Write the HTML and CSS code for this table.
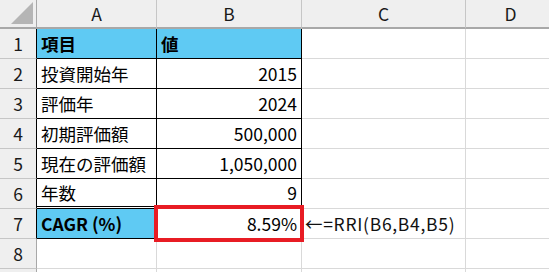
FILE: index.html
```html
<!DOCTYPE html>
<html lang="ja">
<head>
<meta charset="utf-8">
<title>CAGR</title>
<link rel="stylesheet" href="styles.css">
</head>
<body>
<div class="sheet">
  <div class="grid">
    <div class="ch corner"><svg class="tri" width="22" height="22" viewBox="0 0 22 22"><polygon points="22,0 22,22 0,22" fill="#b5b5b5"/></svg></div>
    <div class="ch">A</div>
    <div class="ch">B</div>
    <div class="ch">C</div>
    <div class="ch">D</div>

    <div class="rh edge">1</div>
    <div class="c a fill bold">項目</div>
    <div class="c b fill bold left">値</div>
    <div class="c"></div>
    <div class="c"></div>

    <div class="rh edge">2</div>
    <div class="c a">投資開始年</div>
    <div class="c b num">2015</div>
    <div class="c"></div>
    <div class="c"></div>

    <div class="rh edge">3</div>
    <div class="c a">評価年</div>
    <div class="c b num">2024</div>
    <div class="c"></div>
    <div class="c"></div>

    <div class="rh edge">4</div>
    <div class="c a">初期評価額</div>
    <div class="c b num">500,000</div>
    <div class="c"></div>
    <div class="c"></div>

    <div class="rh edge">5</div>
    <div class="c a">現在の評価額</div>
    <div class="c b num">1,050,000</div>
    <div class="c"></div>
    <div class="c"></div>

    <div class="rh edge">6</div>
    <div class="c a dbl">年数</div>
    <div class="c b num dbl">9</div>
    <div class="c"></div>
    <div class="c"></div>

    <div class="rh edge">7</div>
    <div class="c a fill bold">CAGR (%)</div>
    <div class="c b num">8.59%</div>
    <div class="c note">←=RRI(B6,B4,B5)</div>
    <div class="c"></div>

    <div class="rh">8</div>
    <div class="c"></div>
    <div class="c"></div>
    <div class="c"></div>
    <div class="c"></div>

    <div class="rh"></div>
    <div class="c"></div>
    <div class="c"></div>
    <div class="c"></div>
    <div class="c"></div>
  </div>
  <div class="highlight"></div>
</div>
</body>
</html>
```

FILE: styles.css
```css
html, body {
  margin: 0;
  padding: 0;
  background: #ffffff;
  overflow: hidden;
}

.sheet {
  position: relative;
  width: 549px;
  height: 272px;
  overflow: hidden;
  font-family: "Noto Sans CJK JP", "Noto Sans", sans-serif;
  font-size: 17.5px;
  color: #000;
}

.grid {
  display: grid;
  grid-template-columns: 37px 120px 145px 164px 90px;
  grid-template-rows: 29px repeat(9, 30px);
}

.grid > div {
  box-sizing: border-box;
  display: flex;
  align-items: center;
  white-space: nowrap;
  line-height: 1;
}

.ch {
  background: #efefef;
  border-right: 1px solid #c6c6c6;
  border-bottom: 2px solid #a8a8a8;
  justify-content: center;
  color: #1a1a1a;
  padding-top: 1px;
}

.corner {
  justify-content: flex-end;
  align-items: flex-end !important;
  padding: 0 3px 3px 0;
  border-right: 1px solid #a8a8a8;
}

.tri {
  display: block;
}

.rh {
  background: #efefef;
  border-right: 1px solid #a8a8a8;
  border-bottom: 1px solid #c6c6c6;
  justify-content: center;
  color: #1a1a1a;
}

.rh.edge {
  border-right-color: #000;
}

.c {
  border-right: 1px solid #d9d9d9;
  border-bottom: 1px solid #d9d9d9;
  padding: 1px 4px 0 4px;
}

.c.a, .c.b {
  border-right-color: #000;
  border-bottom-color: #000;
}

.c.dbl {
  border-bottom: 3px double #000;
}

.num {
  justify-content: flex-end;
}

.left {
  justify-content: flex-start;
}

.fill {
  background: #5fcaf3;
}

.bold {
  font-weight: 700;
}

.note {
  overflow: visible;
  color: #111;
  padding-left: 3px;
  letter-spacing: 0.7px;
}

.highlight {
  position: absolute;
  left: 154px;
  top: 205px;
  width: 150px;
  height: 37px;
  box-sizing: border-box;
  border: 4px solid #e81c24;
}
```
